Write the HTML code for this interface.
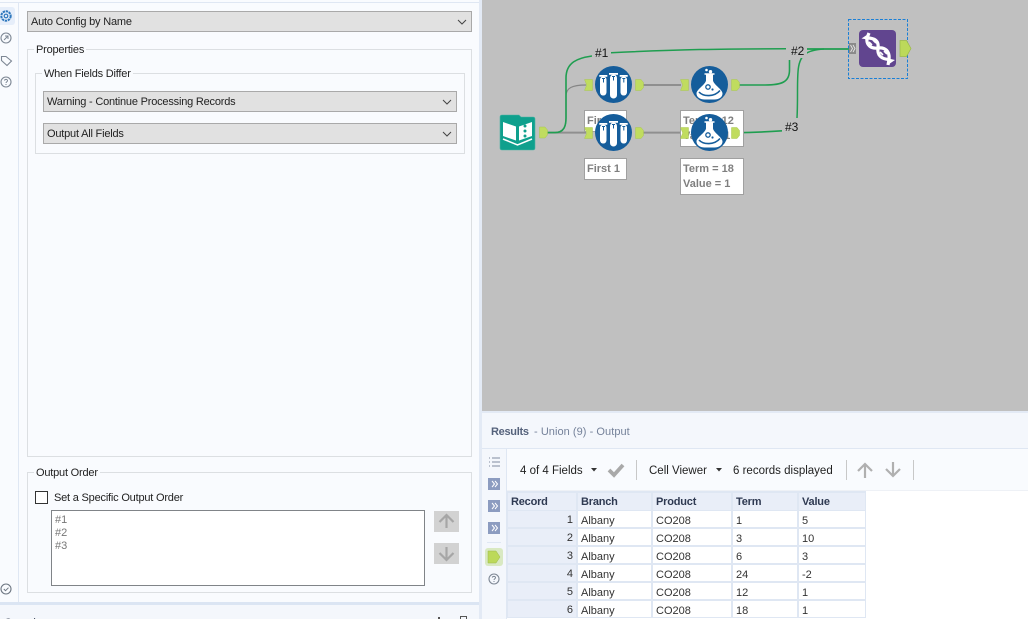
<!DOCTYPE html>
<html><head><meta charset="utf-8">
<style>
html,body{margin:0;padding:0}
html{width:1028px;height:619px;overflow:hidden}
body{width:1028px;height:619px;overflow:hidden;position:relative;background:#fff;font-family:"Liberation Sans",sans-serif;font-size:12px;color:#222}
.a{position:absolute;box-sizing:border-box}
.t{position:absolute;white-space:nowrap;line-height:14px}
.ui{font-size:11px;letter-spacing:-.2px}
.dd{position:absolute;box-sizing:border-box;background:#e1e1e1;border:1px solid #a9a9a9;line-height:21px;padding-left:3px;font-size:11px;letter-spacing:-.2px;color:#222;white-space:nowrap}
.dd svg{position:absolute;right:4px;top:7px}
.fs{position:absolute;box-sizing:border-box;border:1px solid #dcdfe2}
.lg{position:absolute;background:#f9fbfe;padding:0 2px;line-height:14px;font-size:11px;letter-spacing:-.2px;white-space:nowrap}
.cell{position:absolute;box-sizing:border-box;background:#fff;height:16px;line-height:21px;font-size:11px;padding-left:3px;color:#333;white-space:nowrap;overflow:hidden}
.hd{position:absolute;box-sizing:border-box;background:#e9eef8;height:17px;line-height:19px;font-size:11px;font-weight:bold;padding-left:3px;color:#2f3a52;letter-spacing:-.2px;overflow:hidden}
.rn{position:absolute;box-sizing:border-box;background:#e9eef8;height:16px;line-height:18px;font-size:11px;text-align:right;padding-right:3px;color:#333;overflow:hidden}
.note{position:absolute;box-sizing:border-box;background:#fff;border:1px solid #a0a0a0;color:#7f7f7f;font-weight:bold;font-size:11px;line-height:15px;padding:3px 0 0 2px;white-space:nowrap;overflow:hidden}
.lab{position:absolute;color:#111;font-size:12px;line-height:14px;background:#c0c0c0;padding:0 3px}
</style></head><body>

<!-- left panel -->
<div class="a" style="left:0;top:0;width:480px;height:619px;background:#f9fbfe"></div>
<div class="a" style="left:0;top:2px;width:479px;height:1px;background:#dfe7f3"></div>
<div class="a" style="left:18px;top:3px;width:1px;height:599px;background:#dfe7f3"></div>
<div class="a" style="left:0;top:7px;width:15px;height:18px;background:#e6eefa;border-radius:0 3px 3px 0"></div>
<svg class="a" style="left:0;top:8px" width="14" height="70" viewBox="0 0 14 70" fill="none">
  <circle cx="6" cy="8" r="4.700" stroke="#2f78bd" stroke-width="2" stroke-dasharray="2.400 .7"/><circle cx="6" cy="8" r="1.800" stroke="#2f78bd" stroke-width="1.200"/>
  <circle cx="6" cy="30" r="5" stroke="#7d8794" stroke-width="1.100"/><path d="M4 32l4-4M5 28h3v3" stroke="#7d8794"/>
  <path d="M1.500 48.500v4l5.500 5 4.500-4.500-5.500-4.500z" stroke="#7d8794" stroke-width="1.100"/>
</svg>
<svg class="a" style="left:0;top:75px" width="14" height="14" fill="none"><circle cx="6" cy="7" r="5" stroke="#7d8794" stroke-width="1.100"/><path d="M4.500 5.600c.3-1.700 3.200-1.500 3 .2-.1.900-1.500 1-1.500 2.200M6 9v1" stroke="#7d8794"/></svg>
<svg class="a" style="left:0;top:582px" width="14" height="14" fill="none"><circle cx="6" cy="7" r="5" stroke="#6d7682" stroke-width="1.100"/><path d="M3.800 7l1.700 1.700 3-3" stroke="#6d7682"/></svg>

<div class="dd" style="left:27px;top:11px;width:445px;height:21px">Auto Config by Name<svg width="10" height="6" viewBox="0 0 10 6" fill="none"><path d="M1 1l4 4 4-4" stroke="#444" stroke-width="1"/></svg></div>

<div class="fs" style="left:27px;top:49px;width:445px;height:408px"></div>
<div class="lg" style="left:34px;top:43px">Properties</div>
<div class="fs" style="left:35px;top:73px;width:430px;height:81px"></div>
<div class="lg" style="left:42px;top:67px">When Fields Differ</div>
<div class="dd" style="left:43px;top:91px;width:414px;height:21px">Warning - Continue Processing Records<svg width="10" height="6" viewBox="0 0 10 6" fill="none"><path d="M1 1l4 4 4-4" stroke="#444" stroke-width="1"/></svg></div>
<div class="dd" style="left:43px;top:123px;width:414px;height:21px">Output All Fields<svg width="10" height="6" viewBox="0 0 10 6" fill="none"><path d="M1 1l4 4 4-4" stroke="#444" stroke-width="1"/></svg></div>

<div class="fs" style="left:27px;top:472px;width:445px;height:121px"></div>
<div class="lg" style="left:34px;top:466px">Output Order</div>
<div class="a" style="left:35px;top:491px;width:13px;height:13px;background:#fff;border:1px solid #333"></div>
<div class="t ui" style="left:54px;top:491px">Set a Specific Output Order</div>
<div class="a" style="left:51px;top:510px;width:374px;height:76px;background:#fff;border:1px solid #808488;color:#777;font-size:11px;line-height:13px;padding:3px 3px">#1<br>#2<br>#3</div>
<div class="a" style="left:434px;top:511px;width:25px;height:21px;background:#d2d2d2"><svg width="25" height="21" fill="none"><path d="M12.500 17V5M5.500 11l7-7 7 7" stroke="#a6a6a6" stroke-width="2.200"/></svg></div>
<div class="a" style="left:434px;top:543px;width:25px;height:21px;background:#d2d2d2"><svg width="25" height="21" fill="none"><path d="M12.500 4v12M5.500 10l7 7 7-7" stroke="#a6a6a6" stroke-width="2.200"/></svg></div>

<div class="a" style="left:0;top:602px;width:480px;height:3px;background:#dbe5f3"></div>
<div class="a" style="left:0;top:605px;width:480px;height:14px;background:#f4f7fc;overflow:hidden"><div class="t" style="left:4px;top:11px;font-size:11px;color:#3c4658">Overview</div></div>
<div class="a" style="left:438px;top:617px;width:2px;height:2px;background:#555"></div>
<div class="a" style="left:460px;top:616px;width:7px;height:3px;border:1px solid #555;border-bottom:0"></div>

<!-- splitter / canvas -->
<div class="a" style="left:479px;top:0;width:3px;height:619px;background:#e3eaf5"></div>
<div class="a" style="left:482px;top:0;width:546px;height:411px;background:#c0c0c0"></div>

<svg class="a" style="left:482px;top:0" width="546" height="411" viewBox="482 0 546 411" fill="none">
  <!-- grey connections -->
  <path d="M546 132.600H555C564 132 566 126 566 118V96C566 88 572 85 586 85" stroke="#858585" stroke-width="1.200"/>
  <path d="M546 132.600H586" stroke="#8f8f8f" stroke-width="2"/>
  <path d="M642 85H681M642 132.600H681" stroke="#8f8f8f" stroke-width="2"/>
  <!-- green -->
  <path d="M546 132.600H555C564 132.600 566 126 566 118V78C566 62 578 58 592 56" stroke="#1f9e50" stroke-width="1.600"/>
  <path d="M611 52.700C680 49.500 720 48.800 786 48.800" stroke="#1f9e50" stroke-width="1.500"/>
  <path d="M738 85H765C782 85 789.500 82 789.500 70V60" stroke="#1f9e50" stroke-width="1.600"/>
  <path d="M738 132.600C755 132.600 765 132 782 130.800" stroke="#1f9e50" stroke-width="1.600"/>
  <path d="M797 118C798 100 797 85 798 72C799 55 806 50 824 49" stroke="#1f9e50" stroke-width="1.500"/>
  <path d="M807 49H851" stroke="#1f9e50" stroke-width="1.800"/>
</svg>

<!-- notes -->
<div class="note" style="left:584px;top:110px;width:43px;height:22px">First</div>
<div class="note" style="left:584px;top:158px;width:43px;height:22px">First 1</div>
<div class="note" style="left:680px;top:110px;width:64px;height:37px">Term = 12<br>Value = 1</div>
<div class="note" style="left:680px;top:158px;width:64px;height:37px">Term = 18<br>Value = 1</div>

<!-- tools -->
<svg class="a" style="left:482px;top:0" width="546" height="200" viewBox="482 0 546 200" fill="none">
  <defs>
    <g id="pin"><path d="M0 0h8v11H0l2.200-5.500z" fill="#c0dc5f" stroke="#a9c653" stroke-width=".5"/></g>
    <g id="pout"><path d="M0 0h5.500L8 3v5L5.500 11H0z" fill="#c0dc5f" stroke="#a9c653" stroke-width=".5"/></g>
    <g id="tubes">
      <circle cx="0" cy="0" r="18.500" fill="#155d9b"/>
      <rect x="-13.500" y="-8" width="6.500" height="19" rx="3.200" fill="#fff"/><rect x="-14.200" y="-9.500" width="8" height="1.800" fill="#fff"/>
      <rect x="-3.500" y="-10" width="7" height="24" rx="3.500" fill="#fff"/><rect x="-4.500" y="-11.500" width="9" height="1.800" fill="#fff"/>
      <rect x="7" y="-8" width="6.500" height="19" rx="3.200" fill="#fff"/><rect x="6.200" y="-9.500" width="8" height="1.800" fill="#fff"/>
      <path d="M-11.500-6h3M-10-6v4M-1.500-8h3M0-8v4M8.800-6h3M10.300-6v4" stroke="#155d9b" stroke-width="1"/>
    </g>
    <g id="flask">
      <circle cx="0" cy="0" r="18.500" fill="#155d9b"/>
      <path d="M-3.500-10V-4C-4 0-13 5-13 9C-13 13-9 15-5 15H5C9 15 13 13 13 9C13 5 4 0 3.500-4V-10z" fill="#fff"/>
      <path d="M-5-10.500h10" stroke="#fff" stroke-width="1.500"/>
      <circle cx="-3" cy="-14.500" r="1.300" fill="#fff"/><circle cx="1" cy="-12.800" r="1.700" fill="#fff"/>
      <path d="M-10.500 7.500C-6 12.500 5 12.500 10.500 6" stroke="#155d9b" stroke-width="1.600"/>
      <circle cx="-1.500" cy="2.500" r="2.200" stroke="#155d9b" stroke-width="1.300"/><circle cx="3" cy="5" r="1.100" fill="#155d9b"/>
    </g>
  </defs>

  <!-- input book -->
  <path d="M502 115h17l2 2h12c1.500 0 2 .8 2 2v29c0 1.500-.7 2-2 2h-31c-1.500 0-2-.7-2-2v-31c0-1.500.7-2 2-2z" fill="#0fa08d" stroke="#4cb3a4" stroke-width=".6"/>
  <path d="M503 122l13 4.500v14l-13-4.500zM519 126.500l13-4.500v14l-13 4.500z" fill="#fff"/>
  <path d="M503 139l14.500 6 14.500-6" stroke="#fff" stroke-width="1.500"/>
  <circle cx="525" cy="126" r="1.500" fill="#0fa08d"/><circle cx="525" cy="131" r="1.500" fill="#0fa08d"/><circle cx="525" cy="136" r="1.500" fill="#0fa08d"/>
  <use href="#pout" x="539.500" y="127"/>

  <use href="#pin" x="584.500" y="79.500"/><use href="#tubes" x="613.500" y="84.500"/><use href="#pout" x="635.500" y="79.500"/>
  <use href="#pin" x="680.500" y="79.500"/><use href="#flask" x="709.500" y="84.500"/><use href="#pout" x="731.500" y="79.500"/>
  <use href="#pin" x="584.500" y="127.500"/><use href="#tubes" x="613.500" y="132.500"/><use href="#pout" x="635.500" y="127.500"/>
  <use href="#pin" x="680.500" y="127.500"/><use href="#flask" x="709.500" y="132.500"/><use href="#pout" x="731.500" y="127.500"/>

  <!-- union -->
  <rect x="848.500" y="19.500" width="59" height="59" stroke="#1a7fd6" stroke-width="1" stroke-dasharray="3 1.500"/>
  <rect x="849" y="43" width="7" height="11" fill="#8a8a8a"/>
  <path d="M850.500 45l2 3.500-2 3.500M853 45l2 3.500-2 3.500" stroke="#e6e6e6" stroke-width=".9"/>
  <rect x="859" y="30" width="37" height="37" rx="4" fill="#61458f"/>
  <path d="M867 38C875 38 879 41 878 48C877 55 881 59 889 59.500" stroke="#fff" stroke-width="3.200"/>
  <path d="M869 33L867 38C866 45 871 49 878 48C885 47 890 51 889 59.500L888 65" stroke="#fff" stroke-width="3.200"/>
  <path d="M861.500 38.500l6-4v5zM895 60l-6.500 4.500v-6z" fill="#fff"/>
  <path d="M869 42l3 3M873 40l3 3M880 52l3 3M884 51l3 3" stroke="#fff" stroke-width="1.600"/>
  <path d="M900 40.500H906.500L911 48.500L906.500 56.500H900z" fill="#bcd95a" stroke="#9ab84a" stroke-width=".7"/>
</svg>

<div class="lab" style="left:592px;top:46px">#1</div>
<div class="lab" style="left:788px;top:44px">#2</div>
<div class="lab" style="left:782px;top:120px">#3</div>

<!-- results -->
<div class="a" style="left:482px;top:411px;width:546px;height:2px;background:#e3eaf5"></div>
<div class="a" style="left:482px;top:413px;width:546px;height:36px;background:#f4f7fc"></div>
<div class="a" style="left:482px;top:448px;width:546px;height:1px;background:#dfe7f3"></div>
<div class="t" style="left:491px;top:425px;font-size:11px;color:#75829a;letter-spacing:.05px"><b style="color:#55627b;letter-spacing:-.3px">Results</b> &thinsp;- Union (9) - Output</div>

<div class="a" style="left:482px;top:449px;width:25px;height:170px;background:#f4f7fc;border-right:1px solid #dfe7f3"></div>
<svg class="a" style="left:487px;top:455px" width="16" height="135" fill="none">
  <path d="M2 3h1M5 3h8M2 7h1M5 7h8M2 11h1M5 11h8" stroke="#7f8ba0"/>
  <rect x="1" y="23" width="12" height="12" fill="#8c9cc0"/><path d="M5 26l2.500 3-2.500 3M8 26l2.500 3-2.500 3" stroke="#fff"/>
  <rect x="1" y="45" width="12" height="12" fill="#8c9cc0"/><path d="M5 48l2.500 3-2.500 3M8 48l2.500 3-2.500 3" stroke="#fff"/>
  <rect x="1" y="67" width="12" height="12" fill="#8c9cc0"/><path d="M5 70l2.500 3-2.500 3M8 70l2.500 3-2.500 3" stroke="#fff"/>
  <path d="M0 87.500h14" stroke="#dfe7f3"/>
</svg>
<div class="a" style="left:485px;top:548px;width:18px;height:18px;background:#d9e9c2;border-radius:3px"></div>
<svg class="a" style="left:485px;top:548px" width="18" height="18"><path d="M3 3h8l4 6-4 6H3z" fill="#bcd95a" stroke="#9ab84a" stroke-width=".5"/></svg>
<svg class="a" style="left:487px;top:572px" width="14" height="14" fill="none"><circle cx="7" cy="7" r="5" stroke="#7d8794" stroke-width="1.100"/><path d="M5.300 5.600c.3-1.700 3.400-1.500 3.200.2-.1.900-1.500 1-1.500 2.200M7 9v1" stroke="#7d8794"/></svg>

<div class="a" style="left:507px;top:449px;width:521px;height:42px;background:#f9fbfe;border-bottom:1px solid #eef1f6"></div>
<div class="t" style="left:520px;top:464px;font-size:11.500px">4 of 4 Fields</div>
<svg class="a" style="left:590px;top:467px" width="10" height="6"><path d="M1 1h6L4 4.500z" fill="#333"/></svg>
<svg class="a" style="left:607px;top:462px" width="18" height="16" fill="none"><path d="M2 8l5 5 9-10" stroke="#a9a9a9" stroke-width="3.800"/></svg>
<div class="a" style="left:636px;top:460px;width:1px;height:20px;background:#c8c8c8"></div>
<div class="t" style="left:649px;top:464px;font-size:11.500px">Cell Viewer</div>
<svg class="a" style="left:715px;top:467px" width="10" height="6"><path d="M1 1h6L4 4.500z" fill="#333"/></svg>
<div class="t" style="left:733px;top:464px;font-size:11.500px">6 records displayed</div>
<div class="a" style="left:846px;top:460px;width:1px;height:20px;background:#c8c8c8"></div>
<svg class="a" style="left:855px;top:460px" width="50" height="20" fill="none"><path d="M10 18V4M3 11l7-7 7 7M38 2v14M31 9l7 7 7-7" stroke="#b0b0b0" stroke-width="2.200"/></svg>
<div class="a" style="left:913px;top:460px;width:1px;height:20px;background:#c8c8c8"></div>

<!-- table -->
<div class="a" style="left:507px;top:491px;width:359px;height:127px;background:#dfe7f3"></div>
<div class="hd" style="left:508px;top:493px;width:68px">Record</div>
<div class="hd" style="left:578px;top:493px;width:73px">Branch</div>
<div class="hd" style="left:653px;top:493px;width:78px">Product</div>
<div class="hd" style="left:733px;top:493px;width:64px">Term</div>
<div class="hd" style="left:799px;top:493px;width:66px">Value</div>

<div class="rn" style="left:508px;top:511px;width:68px">1</div><div class="cell" style="left:578px;top:511px;width:73px">Albany</div><div class="cell" style="left:653px;top:511px;width:78px">CO208</div><div class="cell" style="left:733px;top:511px;width:64px">1</div><div class="cell" style="left:799px;top:511px;width:66px">5</div>
<div class="rn" style="left:508px;top:529px;width:68px">2</div><div class="cell" style="left:578px;top:529px;width:73px">Albany</div><div class="cell" style="left:653px;top:529px;width:78px">CO208</div><div class="cell" style="left:733px;top:529px;width:64px">3</div><div class="cell" style="left:799px;top:529px;width:66px">10</div>
<div class="rn" style="left:508px;top:547px;width:68px">3</div><div class="cell" style="left:578px;top:547px;width:73px">Albany</div><div class="cell" style="left:653px;top:547px;width:78px">CO208</div><div class="cell" style="left:733px;top:547px;width:64px">6</div><div class="cell" style="left:799px;top:547px;width:66px">3</div>
<div class="rn" style="left:508px;top:565px;width:68px">4</div><div class="cell" style="left:578px;top:565px;width:73px">Albany</div><div class="cell" style="left:653px;top:565px;width:78px">CO208</div><div class="cell" style="left:733px;top:565px;width:64px">24</div><div class="cell" style="left:799px;top:565px;width:66px">-2</div>
<div class="rn" style="left:508px;top:583px;width:68px">5</div><div class="cell" style="left:578px;top:583px;width:73px">Albany</div><div class="cell" style="left:653px;top:583px;width:78px">CO208</div><div class="cell" style="left:733px;top:583px;width:64px">12</div><div class="cell" style="left:799px;top:583px;width:66px">1</div>
<div class="rn" style="left:508px;top:601px;width:68px">6</div><div class="cell" style="left:578px;top:601px;width:73px">Albany</div><div class="cell" style="left:653px;top:601px;width:78px">CO208</div><div class="cell" style="left:733px;top:601px;width:64px">18</div><div class="cell" style="left:799px;top:601px;width:66px">1</div>

</body></html>
